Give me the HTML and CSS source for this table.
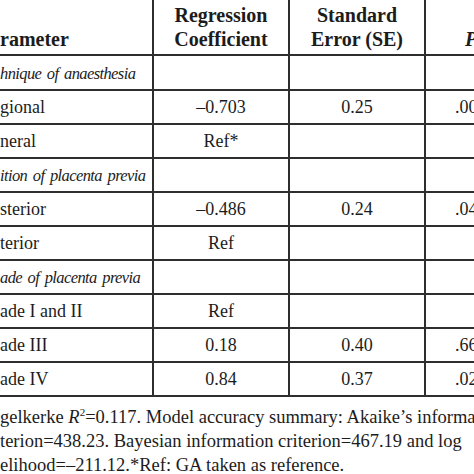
FILE: index.html
```html
<!DOCTYPE html>
<html>
<head>
<meta charset="utf-8">
<link rel="stylesheet" href="styles.css">
</head>
<body>
<div class="page">
  <div class="grid">
    <div class="cell head left">rameter</div>
    <div class="cell head center">Regression<br>Coefficient</div>
    <div class="cell head center">Standard<br>Error (SE)</div>
    <div class="cell head pcol"><i>P</i></div>

    <div class="cell left cat">hnique of anaesthesia</div>
    <div class="cell"></div><div class="cell"></div><div class="cell"></div>

    <div class="cell left">gional</div>
    <div class="cell center">–0.703</div>
    <div class="cell center">0.25</div>
    <div class="cell pval">.00</div>

    <div class="cell left">neral</div>
    <div class="cell center">Ref*</div>
    <div class="cell"></div><div class="cell"></div>

    <div class="cell left cat">ition of placenta previa</div>
    <div class="cell"></div><div class="cell"></div><div class="cell"></div>

    <div class="cell left">sterior</div>
    <div class="cell center">–0.486</div>
    <div class="cell center">0.24</div>
    <div class="cell pval">.04</div>

    <div class="cell left">terior</div>
    <div class="cell center">Ref</div>
    <div class="cell"></div><div class="cell"></div>

    <div class="cell left cat">ade of placenta previa</div>
    <div class="cell"></div><div class="cell"></div><div class="cell"></div>

    <div class="cell left">ade I and II</div>
    <div class="cell center">Ref</div>
    <div class="cell"></div><div class="cell"></div>

    <div class="cell left">ade III</div>
    <div class="cell center">0.18</div>
    <div class="cell center">0.40</div>
    <div class="cell pval">.66</div>

    <div class="cell left">ade IV</div>
    <div class="cell center">0.84</div>
    <div class="cell center">0.37</div>
    <div class="cell pval">.02</div>
  </div>
  <div class="foot">
    <div class="line">gelkerke <i>R</i><sup>2</sup>=0.117. Model accuracy summary: Akaike’s information</div>
    <div class="line">terion=438.23. Bayesian information criterion=467.19 and log</div>
    <div class="line">elihood=–211.12.*Ref: GA taken as reference.</div>
  </div>
</div>
</body>
</html>
```
FILE: styles.css
```css
html, body {
  margin: 0;
  padding: 0;
  background: #fff;
}
body {
  width: 474px;
  height: 474px;
  overflow: hidden;
  font-family: "Liberation Serif", "Times New Roman", serif;
  color: #1c1c1c;
}
.page {
  width: 474px;
  overflow: hidden;
}
.grid {
  display: grid;
  grid-template-columns: 152px 134px 134px 200px;
  grid-template-rows: 54px 33px repeat(9, 32px);
  gap: 2px;
  padding-bottom: 2px;
  background: #2e2e2e;
  width: 626px;
}
.cell {
  background: #fff;
  display: flex;
  align-items: center;
  font-size: 18px;
  white-space: nowrap;
  overflow: hidden;
}
.left {
  justify-content: flex-start;
  padding-left: 0;
}
.center {
  justify-content: center;
  text-align: center;
}
.head {
  font-weight: bold;
  font-size: 20px;
  line-height: 24px;
  align-items: flex-end;
  padding-bottom: 3px;
}
.pcol {
  padding-left: 39px;
}
.pval {
  padding-left: 29px;
}
.cat {
  font-style: italic;
  font-size: 16.5px;
  letter-spacing: -0.6px;
  word-spacing: 2px;
  padding-top: 2px;
}
.foot {
  padding-top: 8px;
  font-size: 18.5px;
  line-height: 24px;
}
.line {
  white-space: nowrap;
}
.foot sup {
  font-size: 11px;
  line-height: 0;
  vertical-align: 7px;
}
```
